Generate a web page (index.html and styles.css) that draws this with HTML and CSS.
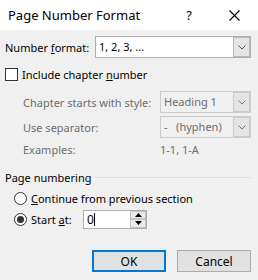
FILE: index.html
```html
<!DOCTYPE html>
<html lang="en">

<head>
  <meta charset="UTF-8">
  <meta name="viewport" content="width=device-width, initial-scale=1.0">
  <title>Page Number Format</title>
  <link rel="stylesheet" href="styles.css">
</head>

<body>
  <div class="dialog">
    <div class="titlebar">
      <span class="title">Page Number Format</span>
      <span class="help">?</span>
      <svg class="close" width="11" height="11" viewBox="0 0 11 11">
        <path d="M0.5 0.5 L10.5 10.5 M10.5 0.5 L0.5 10.5" stroke="#000" stroke-width="1.1" fill="none" />
      </svg>
    </div>

    <div class="content">
      <div class="row format-row">
        <span class="label format-label">Number <u>f</u>ormat:</span>
        <div class="combo">
          <span class="value">1, 2, 3, ...</span>
          <span class="drop">
            <svg width="8" height="5" viewBox="0 0 8 5"><polyline points="0.5,0.5 4,4 7.5,0.5" fill="none" stroke="#555" /></svg>
          </span>
        </div>
      </div>

      <div class="check-row">
        <span class="checkbox"></span>
        <span>Include chapter <u>n</u>umber</span>
      </div>

      <div class="chapter disabled">
        <div class="row sub-row">
          <span class="label sub-label">Chapter starts with style:</span>
          <div class="combo small">
            <span class="value">Heading 1</span>
            <span class="drop">
              <svg width="8" height="5" viewBox="0 0 8 5"><polyline points="0.5,0.5 4,4 7.5,0.5" fill="none" stroke="#777" /></svg>
            </span>
          </div>
        </div>
        <div class="row sub-row second">
          <span class="label sub-label">Use separator:</span>
          <div class="combo small">
            <span class="value">-&nbsp;&nbsp;&nbsp;(hyphen)</span>
            <span class="drop">
              <svg width="8" height="5" viewBox="0 0 8 5"><polyline points="0.5,0.5 4,4 7.5,0.5" fill="none" stroke="#777" /></svg>
            </span>
          </div>
        </div>
        <div class="row examples">
          <span class="label sub-label">Examples:</span>
          <span class="example-value">1-1, 1-A</span>
        </div>
      </div>

      <div class="group-head">
        <span class="group-title">Page numbering</span>
        <span class="rule"></span>
      </div>

      <div class="radio-row">
        <span class="radio"></span>
        <span><u>C</u>ontinue from previous section</span>
      </div>
      <div class="radio-row start-row">
        <span class="radio checked"></span>
        <span class="start-label">Start <u>a</u>t:</span>
        <div class="spinner">
          <span class="spin-value">0<span class="caret"></span></span>
          <span class="spin-buttons">
            <span class="spin-btn">
              <svg width="7" height="4" viewBox="0 0 7 4"><polygon points="0,4 3.5,0 7,4" fill="#000" /></svg>
            </span>
            <span class="spin-btn">
              <svg width="7" height="4" viewBox="0 0 7 4"><polygon points="0,0 7,0 3.5,4" fill="#000" /></svg>
            </span>
          </span>
        </div>
      </div>

      <div class="buttons">
        <button class="btn default" type="button">OK</button>
        <button class="btn" type="button">Cancel</button>
      </div>
    </div>
  </div>
</body>

</html>
```

FILE: styles.css
```css
body {
  margin: 0;
  background: #f0f0f0;
  font-family: "Noto Sans", "Open Sans", sans-serif;
  font-size: 11px;
  color: #000;
  white-space: nowrap;
}

.titlebar {
  display: flex;
  align-items: center;
  height: 30px;
  background: #fff;
}

.title {
  margin-left: 8px;
  font-size: 13px;
  flex: 1;
}

.help {
  font-size: 13px;
  margin-right: 37px;
}

.close {
  margin-right: 18px;
}

.content {
  padding: 0 7px 0 5px;
}

.row {
  display: flex;
  align-items: center;
}

.label {
  flex: none;
}

.format-row {
  margin-top: 6px;
  height: 22px;
}

.format-label {
  width: 90px;
}

.combo {
  flex: 1;
  display: flex;
  height: 22px;
  box-sizing: border-box;
  border: 1px solid #adadad;
  background: #fff;
}

.combo .value {
  flex: 1;
  padding-left: 3px;
  line-height: 20px;
}

.drop {
  width: 17px;
  box-sizing: border-box;
  border: 1px solid #b9b9b9;
  background: #e5e5e5;
  display: flex;
  align-items: center;
  justify-content: center;
}

.check-row {
  display: flex;
  align-items: center;
  height: 13px;
  margin-top: 10px;
}

.checkbox {
  flex: none;
  width: 13px;
  height: 13px;
  box-sizing: border-box;
  border: 1px solid #333;
  background: #fff;
  margin-right: 4px;
}

.chapter {
  padding-left: 18px;
  margin-top: 10px;
}

.disabled {
  color: #6d6d6d;
}

.sub-row {
  height: 22px;
}

.sub-row.second {
  margin-top: 3px;
}

.sub-label {
  width: 137px;
}

.combo.small {
  flex: none;
  width: 91px;
  background: #f0f0f0;
  border-color: #cccccc;
}

.combo.small .drop {
  border-color: #cccccc;
}

.examples {
  height: 16px;
  margin-top: 3px;
}

.group-head {
  display: flex;
  align-items: center;
  height: 16px;
  margin-top: 12px;
}

.group-title {
  flex: none;
  width: 90px;
}

.rule {
  flex: 1;
  height: 1px;
  background: #dcdcdc;
}

.radio-row {
  display: flex;
  align-items: center;
  height: 16px;
  margin-top: 5px;
  padding-left: 9px;
}

.radio {
  flex: none;
  width: 13px;
  height: 13px;
  box-sizing: border-box;
  border: 1px solid #333;
  border-radius: 50%;
  background: #fff;
  margin-right: 4px;
  display: flex;
  align-items: center;
  justify-content: center;
}

.radio.checked::after {
  content: "";
  width: 7px;
  height: 7px;
  border-radius: 50%;
  background: #333;
}

.start-row {
  height: 20px;
  margin-top: 3px;
}

.start-label {
  flex: none;
  width: 52px;
}

.spinner {
  flex: none;
  display: flex;
  width: 64px;
  height: 19px;
  box-sizing: border-box;
  border: 1px solid #adadad;
  background: #fff;
}

.spin-value {
  flex: 1;
  display: flex;
  align-items: center;
  padding-left: 3px;
  font-size: 12px;
}

.caret {
  width: 1px;
  height: 13px;
  background: #000;
}

.spin-buttons {
  width: 16px;
  display: flex;
  flex-direction: column;
}

.spin-btn {
  flex: 1;
  box-sizing: border-box;
  border: 1px solid #c4c4c4;
  background: #ebebeb;
  display: flex;
  align-items: center;
  justify-content: center;
}

.buttons {
  display: flex;
  justify-content: flex-end;
  gap: 11px;
  margin-top: 21px;
}

.btn {
  width: 74px;
  height: 22px;
  box-sizing: border-box;
  border: 1px solid #adadad;
  background: #e1e1e1;
  font-family: inherit;
  font-size: 12px;
  color: #000;
  padding: 0;
}

.btn.default {
  border: 2px solid #0078d7;
}
```
